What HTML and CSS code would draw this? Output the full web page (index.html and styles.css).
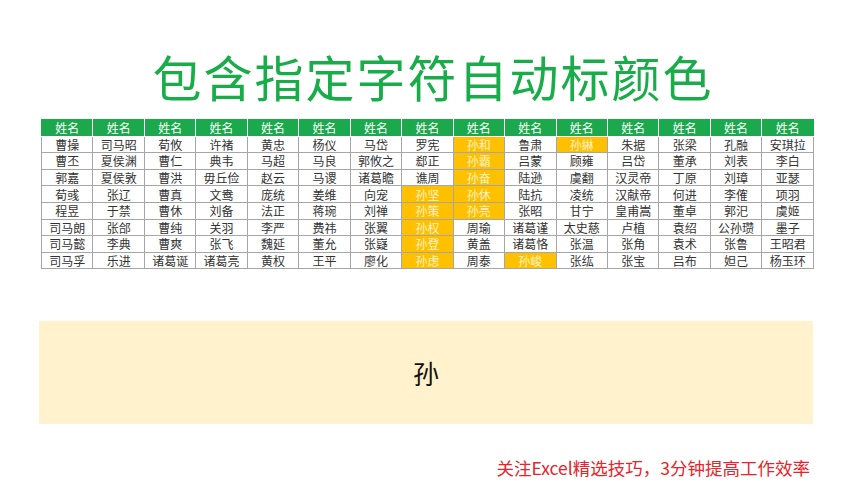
FILE: index.html
```html
<!DOCTYPE html>
<html lang="zh">
<head>
<meta charset="utf-8">
<link rel="stylesheet" href="styles.css">
</head>
<body>
<div class="page">
  <h1 class="title">包含指定字符自动标颜色</h1>
  <table class="grid">
    <thead>
      <tr><th>姓名</th><th>姓名</th><th>姓名</th><th>姓名</th><th>姓名</th><th>姓名</th><th>姓名</th><th>姓名</th><th>姓名</th><th>姓名</th><th>姓名</th><th>姓名</th><th>姓名</th><th>姓名</th><th>姓名</th></tr>
    </thead>
    <tbody>
      <tr><td>曹操</td><td>司马昭</td><td>荀攸</td><td>许褚</td><td>黄忠</td><td>杨仪</td><td>马岱</td><td>罗宪</td><td class="hit">孙和</td><td>鲁肃</td><td class="hit">孙綝</td><td>朱据</td><td>张梁</td><td>孔融</td><td>安琪拉</td></tr>
      <tr><td>曹丕</td><td>夏侯渊</td><td>曹仁</td><td>典韦</td><td>马超</td><td>马良</td><td>郭攸之</td><td>郄正</td><td class="hit">孙霸</td><td>吕蒙</td><td>顾雍</td><td>吕岱</td><td>董承</td><td>刘表</td><td>李白</td></tr>
      <tr><td>郭嘉</td><td>夏侯敦</td><td>曹洪</td><td>毋丘俭</td><td>赵云</td><td>马谡</td><td>诸葛瞻</td><td>谯周</td><td class="hit">孙奋</td><td>陆逊</td><td>虞翻</td><td>汉灵帝</td><td>丁原</td><td>刘璋</td><td>亚瑟</td></tr>
      <tr><td>荀彧</td><td>张辽</td><td>曹真</td><td>文鸯</td><td>庞统</td><td>姜维</td><td>向宠</td><td class="hit">孙坚</td><td class="hit">孙休</td><td>陆抗</td><td>凌统</td><td>汉献帝</td><td>何进</td><td>李傕</td><td>项羽</td></tr>
      <tr><td>程昱</td><td>于禁</td><td>曹休</td><td>刘备</td><td>法正</td><td>蒋琬</td><td>刘禅</td><td class="hit">孙策</td><td class="hit">孙亮</td><td>张昭</td><td>甘宁</td><td>皇甫嵩</td><td>董卓</td><td>郭汜</td><td>虞姬</td></tr>
      <tr><td>司马朗</td><td>张郃</td><td>曹纯</td><td>关羽</td><td>李严</td><td>费祎</td><td>张翼</td><td class="hit">孙权</td><td>周瑜</td><td>诸葛谨</td><td>太史慈</td><td>卢植</td><td>袁绍</td><td>公孙瓒</td><td>墨子</td></tr>
      <tr><td>司马懿</td><td>李典</td><td>曹爽</td><td>张飞</td><td>魏延</td><td>董允</td><td>张嶷</td><td class="hit">孙登</td><td>黄盖</td><td>诸葛恪</td><td>张温</td><td>张角</td><td>袁术</td><td>张鲁</td><td>王昭君</td></tr>
      <tr><td>司马孚</td><td>乐进</td><td>诸葛诞</td><td>诸葛亮</td><td>黄权</td><td>王平</td><td>廖化</td><td class="hit">孙虑</td><td>周泰</td><td class="hit">孙峻</td><td>张纮</td><td>张宝</td><td>吕布</td><td>妲己</td><td>杨玉环</td></tr>
    </tbody>
  </table>
  <div class="keyword">孙</div>
  <p class="footer">关注Excel精选技巧，3分钟提高工作效率</p>
</div>
</body>
</html>
```
FILE: styles.css
```css
html, body {
  margin: 0;
  padding: 0;
  background: #ffffff;
}
.page {
  width: 864px;
  height: 486px;
  box-sizing: border-box;
  padding: 46px 0 0 0;
  font-family: "Noto Sans CJK SC", "Noto Sans", sans-serif;
  display: flex;
  flex-direction: column;
}
.title {
  margin: 0;
  height: 60px;
  line-height: 60px;
  font-size: 49px;
  font-weight: 400;
  letter-spacing: 2px;
  color: #19ad4a;
  text-align: center;
  padding-left: 2px;
}
.grid {
  margin: 13px 0 0 41px;
  width: 773px;
  border-collapse: collapse;
  table-layout: fixed;
  font-size: 12px;
}
.grid th, .grid td {
  height: 15.6px;
  padding: 0;
  border: 1px solid #a6a6a6;
  text-align: center;
  line-height: 15px;
  font-weight: 400;
  white-space: nowrap;
  overflow: hidden;
}
.grid th {
  background: #1ca84c;
  color: #ffffff;
  border-color: #ffffff;
  border-top-color: #1ca84c;
}
.grid th:first-child { border-left-color: #1ca84c; }
.grid th:last-child { border-right-color: #1ca84c; }
.grid td {
  color: #333333;
}
.grid td.hit {
  background: #ffc000;
  color: #fff3c8;
}
.keyword {
  margin: 52px 0 0 39px;
  width: 774px;
  height: 103px;
  background: #fff2cc;
  display: flex;
  align-items: center;
  justify-content: center;
  font-size: 26px;
  color: #111111;
}
.footer {
  margin: 34px 0 0 0;
  width: 810px;
  text-align: right;
  font-size: 17.5px;
  line-height: 20px;
  color: #e8232a;
}
```
